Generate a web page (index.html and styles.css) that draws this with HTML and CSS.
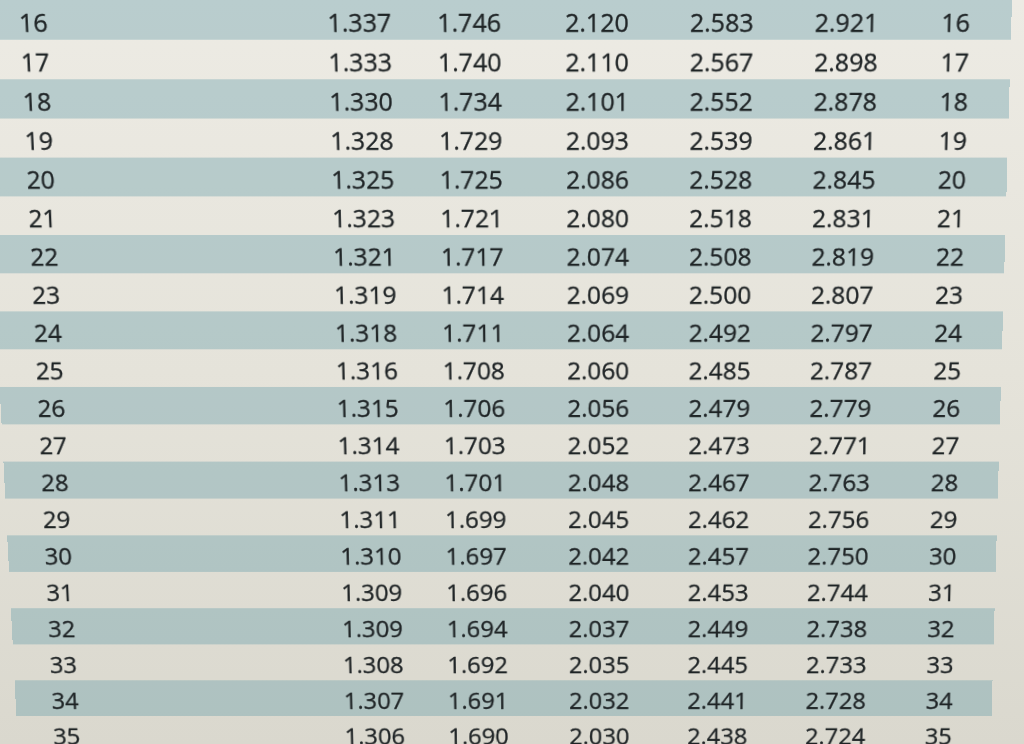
FILE: index.html
```html
<!DOCTYPE html>
<html lang="en">
<head>
<meta charset="utf-8">
<title>t table</title>
<link rel="stylesheet" href="styles.css">
</head>
<body>
<div class="sheet">
  <div class="row"><span>16</span><span>1.337</span><span>1.746</span><span>2.120</span><span>2.583</span><span>2.921</span><span>16</span></div>
  <div class="row"><span>17</span><span>1.333</span><span>1.740</span><span>2.110</span><span>2.567</span><span>2.898</span><span>17</span></div>
  <div class="row"><span>18</span><span>1.330</span><span>1.734</span><span>2.101</span><span>2.552</span><span>2.878</span><span>18</span></div>
  <div class="row"><span>19</span><span>1.328</span><span>1.729</span><span>2.093</span><span>2.539</span><span>2.861</span><span>19</span></div>
  <div class="row"><span>20</span><span>1.325</span><span>1.725</span><span>2.086</span><span>2.528</span><span>2.845</span><span>20</span></div>
  <div class="row"><span>21</span><span>1.323</span><span>1.721</span><span>2.080</span><span>2.518</span><span>2.831</span><span>21</span></div>
  <div class="row"><span>22</span><span>1.321</span><span>1.717</span><span>2.074</span><span>2.508</span><span>2.819</span><span>22</span></div>
  <div class="row"><span>23</span><span>1.319</span><span>1.714</span><span>2.069</span><span>2.500</span><span>2.807</span><span>23</span></div>
  <div class="row"><span>24</span><span>1.318</span><span>1.711</span><span>2.064</span><span>2.492</span><span>2.797</span><span>24</span></div>
  <div class="row"><span>25</span><span>1.316</span><span>1.708</span><span>2.060</span><span>2.485</span><span>2.787</span><span>25</span></div>
  <div class="row"><span>26</span><span>1.315</span><span>1.706</span><span>2.056</span><span>2.479</span><span>2.779</span><span>26</span></div>
  <div class="row"><span>27</span><span>1.314</span><span>1.703</span><span>2.052</span><span>2.473</span><span>2.771</span><span>27</span></div>
  <div class="row"><span>28</span><span>1.313</span><span>1.701</span><span>2.048</span><span>2.467</span><span>2.763</span><span>28</span></div>
  <div class="row"><span>29</span><span>1.311</span><span>1.699</span><span>2.045</span><span>2.462</span><span>2.756</span><span>29</span></div>
  <div class="row"><span>30</span><span>1.310</span><span>1.697</span><span>2.042</span><span>2.457</span><span>2.750</span><span>30</span></div>
  <div class="row"><span>31</span><span>1.309</span><span>1.696</span><span>2.040</span><span>2.453</span><span>2.744</span><span>31</span></div>
  <div class="row"><span>32</span><span>1.309</span><span>1.694</span><span>2.037</span><span>2.449</span><span>2.738</span><span>32</span></div>
  <div class="row"><span>33</span><span>1.308</span><span>1.692</span><span>2.035</span><span>2.445</span><span>2.733</span><span>33</span></div>
  <div class="row"><span>34</span><span>1.307</span><span>1.691</span><span>2.032</span><span>2.441</span><span>2.728</span><span>34</span></div>
  <div class="row"><span>35</span><span>1.306</span><span>1.690</span><span>2.030</span><span>2.438</span><span>2.724</span><span>35</span></div>
</div>
</body>
</html>
```

FILE: styles.css
```css
html, body {
  margin: 0;
  padding: 0;
  height: 100%;
}
body {
  overflow: hidden;
  background: linear-gradient(180deg, #edebe4 0%, #e5e3da 50%, #dad8ce 100%);
  font-family: "Open Sans", "Noto Sans", sans-serif;
  color: #1f2426;
}
.sheet {
  width: 1032px;
  margin-left: -20px;
  display: flex;
  flex-direction: column;
  transform-origin: 660px 0;
  transform: perspective(1000px) rotateX(-4.4deg);
}
.row {
  height: 40px;
  display: grid;
  grid-template-columns: 309px 110px 128px 125px 125px 127px 1fr;
  align-items: center;
  padding-left: 38px;
  font-size: 25px;
  line-height: 40px;
}
.row:nth-child(odd) {
  background: rgba(95, 152, 165, 0.36);
}
.row span {
  white-space: nowrap;
  padding-top: 2px;
  -webkit-text-stroke: 0.35px #1f2426;
}
```
